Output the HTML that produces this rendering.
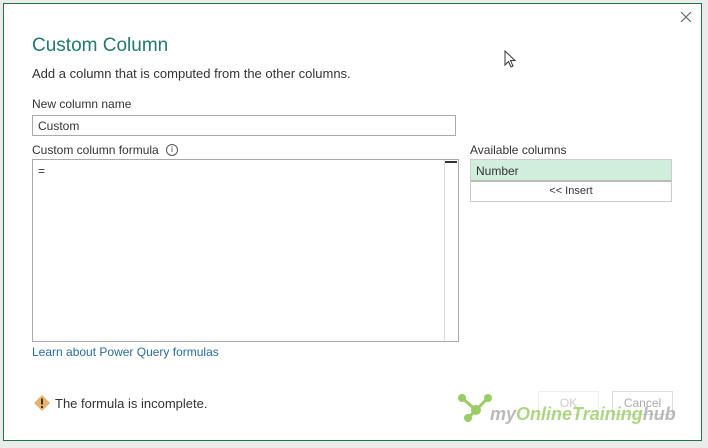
<!DOCTYPE html><html><head><style>
body{margin:0;width:708px;height:448px;background:#ebebeb;position:relative;overflow:hidden;font-family:"Liberation Sans",sans-serif;}
.d{position:absolute;left:3px;top:3px;width:697px;height:436px;background:#fff;border:1px solid #217346;}
.a{position:absolute;white-space:nowrap;color:#333;font-size:12px;}
</style></head><body>
<div class="d"></div>
<svg class="a" style="left:680px;top:11px" width="12" height="12"><path d="M1 1L11 11M11 1L1 11" stroke="#666" stroke-width="1.2"/></svg>
<div class="a" style="left:32px;top:35px;font-size:19px;color:#217a6d">Custom Column</div>
<div class="a" style="left:32px;top:66px;font-size:13px;color:#333">Add a column that is computed from the other columns.</div>
<div class="a" style="left:32px;top:97px">New column name</div>
<div class="a" style="left:32px;top:115px;width:422px;height:19px;border:1px solid #aaa;"></div>
<div class="a" style="left:38px;top:119px">Custom</div>
<div class="a" style="left:32px;top:143px">Custom column formula</div>
<div class="a" style="left:166px;top:144px;width:10px;height:10px;border:1px solid #555;border-radius:50%;font-size:8px;text-align:center;line-height:10px">i</div>
<div class="a" style="left:32px;top:159px;width:425px;height:181px;border:1px solid #aaa;"></div>
<div class="a" style="left:444px;top:160px;width:1px;height:181px;background:#ddd"></div>
<div class="a" style="left:445px;top:161px;width:12px;height:2px;background:#333"></div>
<div class="a" style="left:38px;top:164px">=</div>
<div class="a" style="left:32px;top:345px;color:#2a6aa6">Learn about Power Query formulas</div>
<div class="a" style="left:470px;top:143px">Available columns</div>
<div class="a" style="left:470px;top:159px;width:200px;height:20px;background:#d1eedd;border:1px solid #ccc;border-bottom:2px solid #bbb"></div>
<div class="a" style="left:476px;top:164px">Number</div>
<div class="a" style="left:470px;top:181px;width:200px;height:20px;border:1px solid #ccc;border-top:none;text-align:center;line-height:20px;font-size:11px">&lt;&lt; Insert</div>
<svg class="a" style="left:34px;top:395px" width="16" height="16"><path d="M8 0L16 8L8 16L0 8Z" fill="#e8b26a"/><rect x="7" y="3.5" width="2" height="6" fill="#333"/><rect x="7" y="11" width="2" height="2" fill="#333"/></svg>
<div class="a" style="left:55px;top:396px;font-size:13px">The formula is incomplete.</div>
<div class="a" style="left:538px;top:391px;width:59px;height:22px;border:1px solid #eee;color:#ccc;text-align:center;line-height:22px">OK</div>
<div class="a" style="left:612px;top:391px;width:59px;height:22px;border:1px solid #ddd;color:#aaa;text-align:center;line-height:22px">Cancel</div>
<div class="a" style="left:490px;top:404px;font-size:18px;font-style:italic;font-weight:bold;color:#aaa;opacity:.8">my<span style="color:#9c6">OnlineTraining</span>hub</div>
<svg class="a" style="left:458px;top:392px" width="36" height="30"><g stroke="#9c6" stroke-width="3" fill="none"><path d="M4 6L18 18L30 6M18 18L10 26"/></g><circle cx="4" cy="6" r="4" fill="#9c6"/><circle cx="30" cy="6" r="4" fill="#9c6"/><circle cx="18" cy="18" r="5" fill="#9c6"/><circle cx="10" cy="26" r="4" fill="#9c6"/></svg>
<svg class="a" style="left:504px;top:50px" width="14" height="20"><path d="M1 1L1 15L4.5 11.5L7 17L9 16L6.5 10.5L11 10.5Z" fill="#fff" stroke="#333"/></svg>
</body></html>
